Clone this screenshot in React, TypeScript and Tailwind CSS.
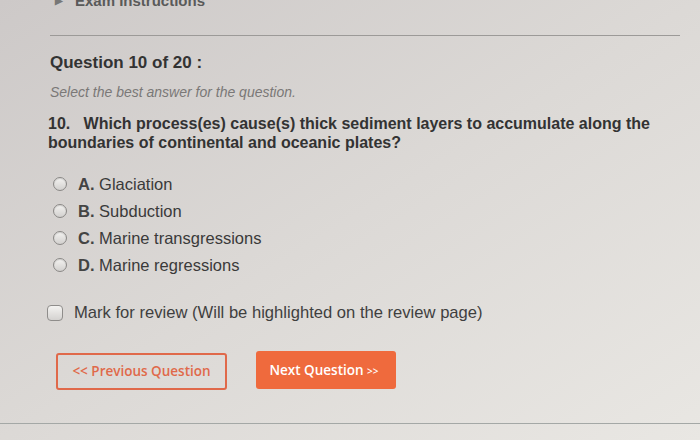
const options = [
  { key: "A.", label: "Glaciation" },
  { key: "B.", label: "Subduction" },
  { key: "C.", label: "Marine transgressions" },
  { key: "D.", label: "Marine regressions" },
];

function Radio() {
  return (
    <span className="inline-block h-[14px] w-[14px] shrink-0 rounded-full border-[1.5px] border-[#8a8886] bg-gradient-to-b from-[#f4f3f1] to-[#d2d0ce] shadow-[inset_0_1px_1px_rgba(0,0,0,0.15)]" />
  );
}

export default function App() {
  return (
    <div className="h-[440px] w-[700px] overflow-hidden bg-gradient-to-br from-[#cdc9c8] via-[#dcd9d6] to-[#e9e7e3] font-['Liberation_Sans',Arial,sans-serif] text-[#3a3a3a]">
      <div className="-mt-[7px] flex h-[16px] items-center gap-[12px] pl-[55px] text-[15px] font-bold leading-[16px] text-[#5a5a5a]">
        <span className="text-[10px] text-[#777]">▶</span>
        <span>Exam Instructions</span>
      </div>
      <div className="ml-[50px] mr-[20px] mt-[26px] h-px bg-[#9c9a98]" />

      <div className="pl-[50px] pr-[30px]">
        <h2 className="mt-[17px] text-[17px] font-bold leading-[20px] text-[#333]">Question 10 of 20 :</h2>
        <p className="mt-[10px] text-[14px] italic leading-[18px] text-[#7a7877]">Select the best answer for the question.</p>
        <p className="-ml-[2px] mt-[13px] text-[16px] font-bold leading-[19px] text-[#333]">
          10.&nbsp;&nbsp; Which process(es) cause(s) thick sediment layers to accumulate along the boundaries of continental and oceanic plates?
        </p>

        <ul className="mt-[23px] flex flex-col gap-[9px] pl-[3px]">
          {options.map((o) => (
            <li key={o.key} className="flex items-center gap-[11px] text-[16.5px] leading-[18px] text-[#3a3a3a]">
              <Radio />
              <span>
                <span className="font-bold text-[#444]">{o.key}</span> {o.label}
              </span>
            </li>
          ))}
        </ul>

        <label className="-ml-[3px] mt-[29px] flex h-[20px] items-center gap-[11px] text-[16.6px] leading-[20px] text-[#3f3f3f]">
          <span className="inline-block h-[16px] w-[16px] rounded-[4px] border border-[#8f8d8b] bg-gradient-to-b from-[#f4f3f1] to-[#d4d2d0]" />
          Mark for review (Will be highlighted on the review page)
        </label>

        <div className="mt-[30px] flex items-center gap-[29px] pl-[6px] font-['Open_Sans',sans-serif]">
          <button className="h-[37px] w-[171px] rounded-[3px] border-2 border-[#e0694a] text-[13.5px] font-semibold text-[#e0694a]">
            &lt;&lt; Previous Question
          </button>
          <button className="-mt-[3px] h-[38px] w-[140px] rounded-[3px] bg-[#ef6a3d] pr-[4px] text-[13.5px] font-semibold text-white">
            Next Question <span className="text-[10px]">&gt;&gt;</span>
          </button>
        </div>
      </div>

      <div className="mt-[33px] h-px bg-[#a4a8a6]" />
    </div>
  );
}
